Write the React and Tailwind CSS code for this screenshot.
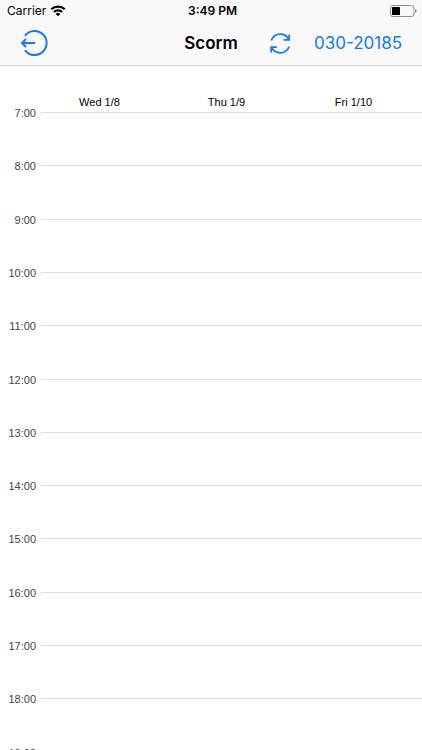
const days = ["Wed 1/8", "Thu 1/9", "Fri 1/10"];
const hours = Array.from({ length: 13 }, (_, i) => `${i + 7}:00`);

function WifiIcon() {
  return (
    <svg width="16" height="12" viewBox="0 0 16 12" fill="none" stroke="#000" strokeWidth="2.200" aria-hidden="true">
      <path d="M1.300 4.300a9.500 9.500 0 0 1 13.400 0" />
      <path d="M3.900 7a5.800 5.800 0 0 1 8.200 0" />
      <path d="M8 11.200 5.700 8.900a3.300 3.300 0 0 1 4.600 0Z" fill="#000" stroke="none" />
    </svg>
  );
}

function BatteryIcon() {
  return (
    <svg width="28" height="12" viewBox="0 0 28 12" aria-hidden="true">
      <rect x="0.5" y="0.5" width="23.5" height="11" rx="2.5" fill="none" stroke="#8f8f8f" />
      <rect x="2" y="2" width="8" height="8" rx="0.5" fill="#000" />
      <path d="M25.200 4v4c1-.4 1.400-1.200 1.400-2s-.4-1.600-1.400-2Z" fill="#8f8f8f" />
    </svg>
  );
}

function LogoutIcon() {
  return (
    <svg width="28" height="28" viewBox="0 0 28 28" fill="none" stroke="currentColor" strokeWidth="2" strokeLinecap="round" strokeLinejoin="round" aria-hidden="true">
      <path d="M5.500 5.200A12 12 0 1 1 5.500 20.800" />
      <path d="M14.500 13H2M5.500 9.500 2 13l3.500 3.500" />
    </svg>
  );
}

function RefreshIcon() {
  return (
    <svg width="22" height="22" viewBox="0 0 22 22" fill="none" stroke="currentColor" strokeWidth="1.800" aria-hidden="true">
      <path d="M1.200 7.500C2.900 3.500 6.200 1.200 10.200 1.200c3.500 0 6.700 2 8.500 5" />
      <path d="M19.200 1.500v5.300h-5.600" />
      <path d="M19.200 13.500c-1.700 4-5 6.300-9 6.300-3.500 0-6.700-2-8.500-5" />
      <path d="M1.200 19.500v-5.300h5.600" />
    </svg>
  );
}

export default function App() {
  return (
    <div className="flex h-screen flex-col overflow-hidden bg-white font-['Liberation_Sans',Arial,sans-serif] text-black">
      <header className="shrink-0 border-b border-[#d2d2d2] bg-[#f9f9f9] font-[Inter,sans-serif]">
        <div className="grid h-[22px] grid-cols-3 items-center pl-[7px] pr-1 text-xs">
          <div className="flex items-center gap-1">
            <span>Carrier</span>
            <WifiIcon />
          </div>
          <span className="text-center font-semibold">3:49 PM</span>
          <div className="flex justify-end">
            <BatteryIcon />
          </div>
        </div>
        <nav className="grid h-[43px] grid-cols-[1fr_auto_1fr] items-center px-5">
          <button type="button" aria-label="Log out" className="justify-self-start text-[#1379f5]">
            <LogoutIcon />
          </button>
          <h1 className="text-[17px] font-semibold">Scorm</h1>
          <div className="flex items-center justify-end gap-[22px] text-[#1379f5]">
            <button type="button" aria-label="Refresh">
              <RefreshIcon />
            </button>
            <button type="button" className="text-[17px]">030-20185</button>
          </div>
        </nav>
      </header>
      <main className="flex-1 overflow-hidden pt-7">
        <div className="grid grid-cols-3 pl-9 pr-[5px] text-center text-[11px] leading-4">
          {days.map((day) => (
            <span key={day}>{day}</span>
          ))}
        </div>
        <ol className="grid h-[694px] auto-rows-fr pt-px">
          {hours.map((hour) => (
            <li key={hour} className="flex items-start">
              <time className="-mt-1.5 w-9 text-right text-[11px] leading-4 text-[#444]">{hour}</time>
              <div className="ml-[5px] mt-px flex-1 border-t border-[#dedede]" />
            </li>
          ))}
        </ol>
      </main>
    </div>
  );
}
